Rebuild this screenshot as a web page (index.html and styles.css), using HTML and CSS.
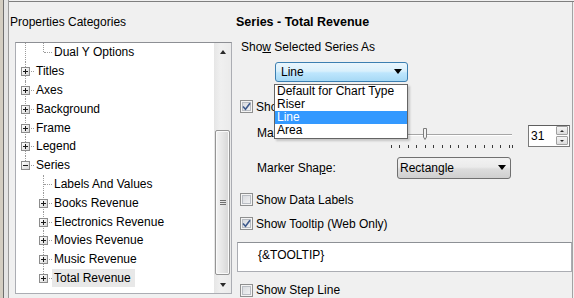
FILE: index.html
```html
<!DOCTYPE html>
<html>
<head>
<meta charset="utf-8">
<link rel="stylesheet" href="styles.css">
</head>
<body>
<div class="app">
  <div class="edge"></div>
  <div class="main">
    <div class="left">
      <div class="ptitle">Properties Categories</div>
      <div class="tree">
        <div class="tree-body">
          <div class="row"><span class="cell v"></span><span class="cell l h"></span><span class="lbl">Dual Y Options</span></div>
          <div class="row"><span class="cell v h"><i class="box plus"></i></span><span class="lbl">Titles</span></div>
          <div class="row"><span class="cell v h"><i class="box plus"></i></span><span class="lbl">Axes</span></div>
          <div class="row"><span class="cell v h"><i class="box plus"></i></span><span class="lbl">Background</span></div>
          <div class="row"><span class="cell v h"><i class="box plus"></i></span><span class="lbl">Frame</span></div>
          <div class="row"><span class="cell v h"><i class="box plus"></i></span><span class="lbl">Legend</span></div>
          <div class="row"><span class="cell l h"><i class="box"></i></span><span class="lbl">Series</span></div>
          <div class="row"><span class="cell"></span><span class="cell v h"></span><span class="lbl">Labels And Values</span></div>
          <div class="row"><span class="cell"></span><span class="cell v h"><i class="box plus"></i></span><span class="lbl">Books Revenue</span></div>
          <div class="row"><span class="cell"></span><span class="cell v h"><i class="box plus"></i></span><span class="lbl">Electronics Revenue</span></div>
          <div class="row"><span class="cell"></span><span class="cell v h"><i class="box plus"></i></span><span class="lbl">Movies Revenue</span></div>
          <div class="row"><span class="cell"></span><span class="cell v h"><i class="box plus"></i></span><span class="lbl">Music Revenue</span></div>
          <div class="row"><span class="cell"></span><span class="cell l h"><i class="box plus"></i></span><span class="lbl sel">Total Revenue</span></div>
        </div>
        <div class="sb">
          <div class="sb-btn"><i class="tri-up"></i></div>
          <div class="thumb"><i class="grip"></i></div>
          <div class="sb-fill"></div>
          <div class="sb-btn"><i class="tri-down"></i></div>
        </div>
      </div>
    </div>
    <div class="right">
      <div class="rtitle">Series - Total Revenue</div>
      <div class="label1">Sho<u>w</u> Selected Series As</div>
      <div class="combo focus"><span>Line</span><i class="tri-down dark"></i></div>
      <div class="chk-row first"><span class="cb"><svg width="9" height="9" viewBox="0 0 9 9"><path d="M1 4.5 L3.5 7.2 L8 1.3" fill="none" stroke="#3e5a8c" stroke-width="1.6"/></svg></span><span>Show Markers</span></div>
      <div class="size-row">
        <span class="size-lbl">Marker Size:</span>
        <div class="slider">
          <div class="track"></div>
          <svg class="sthumb" width="6" height="12" viewBox="0 0 6 12"><path d="M1.5 0.5 H4.5 V9 L3 11.5 L1.5 9 Z" fill="#f4f4f4" stroke="#7c7c7c"/></svg>
          <div class="ticks"><i></i><i></i><i></i><i></i><i></i><i></i><i></i><i></i><i></i><i></i><i></i><i></i><i></i><i></i><i></i></div>
        </div>
        <div class="spin"><span>31</span><div class="spin-btns"><div class="sbtn"><i class="tri-up small"></i></div><div class="sbtn"><i class="tri-down small"></i></div></div></div>
      </div>
      <div class="shape-row">
        <span class="shape-lbl">Marker Sha<u>p</u>e:</span>
        <div class="combo gray"><span>Rectangle</span><i class="tri-down dark"></i></div>
      </div>
      <div class="chk-row dl"><span class="cb"></span><span>Show Data Labels</span></div>
      <div class="chk-row tt"><span class="cb"><svg width="9" height="9" viewBox="0 0 9 9"><path d="M1 4.5 L3.5 7.2 L8 1.3" fill="none" stroke="#3e5a8c" stroke-width="1.6"/></svg></span><span>Show Tooltip (Web Only)</span></div>
      <div class="textbox">{&amp;TOOLTIP}</div>
      <div class="chk-row sl"><span class="cb"></span><span>Show Step Line</span></div>

      <div class="popup">
        <div class="opt">Default for Chart Type</div>
        <div class="opt">Riser</div>
        <div class="opt hi">Line</div>
        <div class="opt">Area</div>
      </div>
    </div>
  </div>
</div>
</body>
</html>
```

FILE: styles.css
```css
* { box-sizing: border-box; }
html, body { margin: 0; padding: 0; }
body {
  width: 574px;
  height: 298px;
  overflow: hidden;
  background: #f0f0f0;
  font: 12px/16px "Liberation Sans", Arial, sans-serif;
  color: #000;
}
u { text-decoration: underline; }

.app { display: flex; height: 298px; }
.edge {
  width: 9px;
  flex: none;
  background: linear-gradient(to right, #d3cdc1 0 3px, #6e6e6e 3px 4px, #e4e4e4 4px 8px, #9a9a9a 8px 9px);
}
.main {
  flex: 1;
  display: flex;
  margin-top: 1px;
  border-top: 1px solid #7f7f7f;
}

/* left panel */
.left {
  width: 224px;
  flex: none;
  padding: 12px 0 0 1px;
  display: flex;
  flex-direction: column;
}
.ptitle { line-height: 16px; }
.tree {
  margin: 12px 0 0 5px;
  width: 217px;
  height: 252px;
  border: 1px solid #abadb3;
  border-top-color: #8d8f94;
  background: #fff;
  display: flex;
}
.tree-body { flex: 1; overflow: hidden; }
.row {
  height: 18.8px;
  display: flex;
  align-items: center;
  white-space: nowrap;
}
.cell {
  width: 18px;
  height: 100%;
  flex: none;
  position: relative;
}
.cell.v::before, .cell.l::before {
  content: "";
  position: absolute;
  left: 9px;
  top: 0;
  border-left: 1px dotted #9c9c9c;
}
.cell.v::before { bottom: 0; }
.cell.l::before { height: 50%; }
.cell.h::after {
  content: "";
  position: absolute;
  left: 10px;
  right: 0;
  top: 50%;
  border-top: 1px dotted #9c9c9c;
}
.box {
  position: absolute;
  left: 5px;
  top: calc(50% - 4px);
  width: 9px;
  height: 9px;
  border: 1px solid #8c8c8c;
  background: linear-gradient(135deg, #ffffff, #d8d8d8);
  z-index: 1;
}
.box::before {
  content: "";
  position: absolute;
  left: 1px;
  top: 3px;
  width: 5px;
  height: 1px;
  background: #1a1a1a;
}
.box.plus::after {
  content: "";
  position: absolute;
  left: 3px;
  top: 1px;
  width: 1px;
  height: 5px;
  background: #1a1a1a;
}
.lbl { padding: 1px 2px; line-height: 16px; }
.lbl.sel { background: #e8e8e8; padding-right: 4px; }

.sb {
  width: 17px;
  flex: none;
  display: flex;
  flex-direction: column;
  background: linear-gradient(to right, #e6e6e6, #f0f0f0 40%, #ebebeb);
}
.sb-btn {
  height: 17px;
  flex: none;
  display: flex;
  align-items: center;
  justify-content: center;
}
.sb-fill { flex: 1; }
.tri-up, .tri-down { display: block; width: 0; height: 0; }
.tri-up { border-left: 3.5px solid transparent; border-right: 3.5px solid transparent; border-bottom: 4px solid #2a2a2a; }
.tri-down { border-left: 3.5px solid transparent; border-right: 3.5px solid transparent; border-top: 4px solid #2a2a2a; }
.thumb {
  margin: 70px 0 0 1px;
  width: 15px;
  height: 145px;
  flex: none;
  border: 1px solid #959595;
  border-radius: 2px;
  background: linear-gradient(to right, #f3f3f3, #e6e6e6 50%, #d6d6d6);
  box-shadow: inset 0 0 0 1px #fafafa;
  display: flex;
  align-items: center;
  justify-content: center;
}
.grip {
  display: block;
  width: 6px;
  height: 5px;
  background: repeating-linear-gradient(to bottom, #6f6f6f 0 1px, transparent 1px 2px);
}

/* right panel */
.right {
  flex: 1;
  position: relative;
  padding: 12px 0 0 3px;
  margin-right: 1px;
  border-right: 1px solid #a3a3a3;
  display: flex;
  flex-direction: column;
  align-items: flex-start;
}
.rtitle { font-weight: bold; font-size: 12.5px; line-height: 16px; }
.label1 { margin: 9px 0 0 5px; line-height: 16px; }

.combo {
  display: flex;
  align-items: center;
  justify-content: space-between;
  border-radius: 3px;
}
.combo.focus {
  margin: 7px 0 0 39px;
  width: 133px;
  height: 20px;
  padding: 0 5px 0 5px;
  border: 1px solid #3c7fb1;
  background: linear-gradient(to bottom, #eaf6fd, #d9f0fc 45%, #bee6fd 55%, #a7d9f5);
}
.combo.gray {
  width: 114px;
  height: 22px;
  padding: 0 4px 0 2px;
  border: 1px solid #707070;
  background: linear-gradient(to bottom, #f2f2f2, #ebebeb 45%, #dddddd 55%, #cfcfcf);
}
.tri-down.dark { border-left-width: 4px; border-right-width: 4px; border-top: 5px solid #000; }

.chk-row {
  display: flex;
  align-items: center;
  gap: 3px;
  height: 16px;
  margin-left: 4px;
  white-space: nowrap;
}
.chk-row.first { margin-top: 17px; }
.chk-row.dl { margin-top: 13px; }
.chk-row.tt { margin-top: 8px; }
.chk-row.sl { margin-top: 10px; }
.cb {
  width: 13px;
  height: 13px;
  flex: none;
  border: 1px solid #8e8f8f;
  background: linear-gradient(135deg, #d2d5da, #f7f7f7);
  box-shadow: inset 0 0 0 1px #f4f4f4, inset 0 0 0 2px #b9bdc3;
  display: flex;
  align-items: center;
  justify-content: center;
}
.cb svg { display: block; }

.size-row {
  margin: 10px 0 0 21px;
  height: 22px;
  display: flex;
  align-items: flex-start;
}
.size-lbl { width: 133px; line-height: 16px; flex: none; white-space: nowrap; }
.slider { width: 122px; height: 22px; position: relative; flex: none; }
.track {
  margin-top: 9px;
  height: 2px;
  border-top: 1px solid #a6a6a6;
  border-bottom: 1px solid #ffffff;
}
.sthumb { position: absolute; left: 32px; top: 3px; }
.ticks {
  position: absolute;
  left: 1px;
  right: 2px;
  top: 20px;
  height: 3px;
  display: flex;
  justify-content: space-between;
}
.ticks i { display: block; width: 1px; height: 3px; background: #3a3a3a; }
.ticks i:last-child { box-shadow: 3px 0 0 #3a3a3a; }
.spin {
  margin-left: 16px;
  width: 42px;
  height: 22px;
  border: 1px solid #7a7a7a;
  border-top-color: #5f5f5f;
  background: #fff;
  display: flex;
  align-items: center;
  justify-content: space-between;
  padding: 0 1px 0 2px;
}
.spin-btns { display: flex; flex-direction: column; gap: 1px; }
.sbtn {
  width: 12px;
  height: 9px;
  border: 1px solid #a0a0a0;
  border-radius: 1px;
  background: linear-gradient(to bottom, #f5f5f5, #dcdcdc);
  display: flex;
  align-items: center;
  justify-content: center;
}
.tri-up.small { border-left-width: 2px; border-right-width: 2px; border-bottom-width: 2px; }
.tri-down.small { border-left-width: 2px; border-right-width: 2px; border-top-width: 2px; }

.shape-row {
  margin: 10px 0 0 21px;
  display: flex;
  align-items: center;
}
.shape-lbl { width: 140px; flex: none; }

.textbox {
  margin: 10px 0 0 1px;
  align-self: stretch;
  height: 31px;
  border: 1px solid #abadb3;
  border-top-color: #8d9095;
  background: #fff;
  padding: 4px 20px;
  line-height: 16px;
}

.popup {
  position: absolute;
  left: 41px;
  top: 82px;
  width: 134px;
  border: 1px solid #646464;
  background: #fff;
  padding-bottom: 1px;
  box-shadow: 2px 2px 2px rgba(0, 0, 0, 0.18);
}
.opt { height: 13px; line-height: 13px; padding-left: 2px; white-space: nowrap; }
.opt.hi { background: #3399ff; color: #fff; }
```
